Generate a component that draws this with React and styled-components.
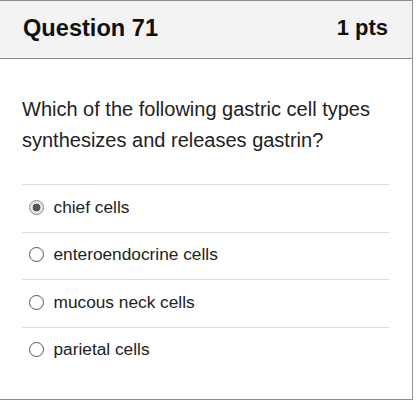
import React from "react";
import styled, { createGlobalStyle } from "styled-components";

const answers = [
  { id: "a", text: "chief cells", checked: true },
  { id: "b", text: "enteroendocrine cells" },
  { id: "c", text: "mucous neck cells" },
  { id: "d", text: "parietal cells" },
];

function App() {
  return (
    <>
      <GlobalStyle />
      <Card>
        <Header>
          <Title>Question 71</Title>
          <Points>1 pts</Points>
        </Header>
        <Body>
          <QuestionText>
            Which of the following gastric cell types synthesizes and releases
            gastrin?
          </QuestionText>
          <Answers>
            {answers.map((a) => (
              <Answer key={a.id}>
                <Radio checked={a.checked} />
                <AnswerText>{a.text}</AnswerText>
              </Answer>
            ))}
          </Answers>
        </Body>
      </Card>
    </>
  );
}

const GlobalStyle = createGlobalStyle`
  body {
    margin: 0;
    background: #ffffff;
    font-family: "Liberation Sans", Arial, sans-serif;
    color: #1f1f1f;
  }
`;

const Card = styled.div`
  box-sizing: border-box;
  width: 414px;
  margin-left: -1px;
  border: 1px solid #8f8f8f;
  background: #ffffff;
`;

const Header = styled.div`
  height: 58px;
  display: flex;
  align-items: center;
  justify-content: space-between;
  padding: 0 24px 3px 23px;
  box-sizing: border-box;
  background: #f3f3f3;
  border-bottom: 1px solid #8f8f8f;
`;

const Title = styled.div`
  font-size: 23.6px;
  font-weight: bold;
  color: #111;
`;

const Points = styled.div`
  font-size: 22px;
  font-weight: bold;
  color: #111;
`;

const Body = styled.div`
  padding: 35px 23px 25px 22px;
`;

const QuestionText = styled.div`
  font-size: 20px;
  line-height: 31px;
  color: #222;
  margin-bottom: 28px;
`;

const Answers = styled.div`
  display: flex;
  flex-direction: column;
`;

const Answer = styled.div`
  height: 47.5px;
  box-sizing: border-box;
  border-top: 1px solid #dcdcdc;
  display: flex;
  align-items: center;
  padding: 0 0 2px 6.5px;
  gap: 10px;
`;

const Radio = styled.span`
  box-sizing: border-box;
  width: 15px;
  height: 15px;
  border-radius: 50%;
  border: 1px solid ${(p) => (p.checked ? "#8a8a8a" : "#555")};
  background: ${(p) =>
    p.checked
      ? "radial-gradient(circle, #555 0 3.6px, #e6e6e6 4.2px)"
      : "#fff"};
  flex-shrink: 0;
`;

const AnswerText = styled.span`
  font-size: 17.3px;
  color: #222;
`;

export default App;
